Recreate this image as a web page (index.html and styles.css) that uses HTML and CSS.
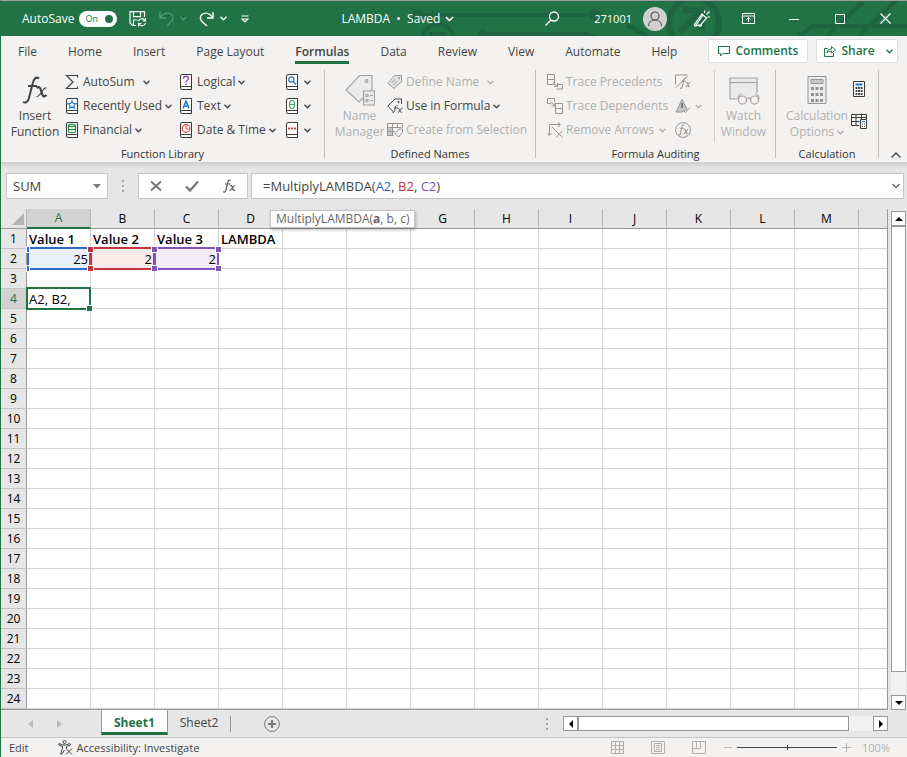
FILE: index.html
```html
<!DOCTYPE html>
<html lang="en">
<head>
  <meta charset="UTF-8">
  <title>LAMBDA - Excel</title>
  <link rel="stylesheet" href="styles.css">
</head>
<body>

  <!-- shared icons -->
  <svg class="sprite" width="0" height="0" aria-hidden="true">
    <symbol id="chevron" viewBox="0 0 7 5"><path d="M.5 .8 3.5 3.8 6.5 .8" fill="none" stroke="currentColor" stroke-width="1.3"/></symbol>
    <symbol id="book" viewBox="0 0 16 16"><path d="M13.5 .5H4a1.5 1.5 0 0 0-1.5 1.5v12A1.5 1.5 0 0 0 4 15.5h9.500z" fill="#fff" stroke="#3b3a39"/><path d="M2.500 13.500A1.500 1.500 0 0 1 4 12.500h9.500" fill="none" stroke="#3b3a39"/></symbol>
    <symbol id="fx" viewBox="0 0 14 14"><path d="M8.500 1.500C6.500 .5 6 2 5.500 4.500L4 11C3.600 13 2.500 13.500 1 12.800M3 5h5M8 6.500c1.500-.8 2 .5 2.500 2.500s1 3 2.500 2M13 6.500c-2 0-3 5-5.500 5" fill="none" stroke="currentColor" stroke-width="1.200"/></symbol>
  </svg>

  <header class="titlebar">
    <svg class="circuit" width="500" height="36" viewBox="0 0 500 36" fill="none" stroke="#1f6440" stroke-width="4" aria-hidden="true">
      <circle cx="11" cy="15" r="4"/><path d="M15 15h166"/><circle cx="188" cy="15" r="4" fill="#1f6440"/>
      <circle cx="31" cy="40" r="16"/><path d="M22 34h18"/>
      <circle cx="76" cy="34" r="3"/><path d="M80 34h100l10 4"/>
      <path d="M220 25l22 12"/><circle cx="287" cy="23" r="25" stroke-width="6"/><path d="M275 10h20v20M295 10l-22 22" stroke-width="6"/>
      <path d="M392 36l14-10h100M452 36l38-36M420 36l36-34"/>
    </svg>
    <label class="autosave">AutoSave
      <input type="checkbox" checked>
      <span class="toggle">On</span>
    </label>
    <div class="quick">
      <button aria-label="Save"><svg width="18" height="16" viewBox="0 0 18 16" fill="none" stroke="currentColor" stroke-width="1.200"><path d="M7 14.500H3.500L1 12V.6h14.500V6M4.500 .6v5h7v-5M4.500 14.500V9h4"/><path d="M9.500 10.500a3.500 3.500 0 0 1 6.500-1M16.500 7v3h-3M16.500 12a3.500 3.500 0 0 1-6.500 1M9.500 15.500v-3h3"/></svg></button>
      <button class="dim" aria-label="Undo"><svg width="16" height="16" viewBox="0 0 16 16" fill="none" stroke="currentColor" stroke-width="1.400"><path d="M1 1v6h6M1.500 6.500C4 2 9 1 12.500 3.500c3 3 1 6-.5 7.500L8 15"/></svg></button>
      <button class="dim drop" aria-label="Undo list"><svg width="7" height="5"><use href="#chevron"/></svg></button>
      <button class="redo" aria-label="Redo"><svg width="16" height="16" viewBox="0 0 16 16" fill="none" stroke="currentColor" stroke-width="1.400"><path d="M14 1v6H8M13.500 6.500C11 2 6 1 3 3.500S1.500 9 3.500 11L8 15"/></svg></button>
      <button class="drop" aria-label="Redo list"><svg width="7" height="5"><use href="#chevron"/></svg></button>
      <button class="custom" aria-label="Customize toolbar"><svg width="8" height="8" viewBox="0 0 8 8" fill="none" stroke="currentColor" stroke-width="1.200"><path d="M.5 1h7M1 4l3 3 3-3z"/></svg></button>
    </div>
    <button class="doc">LAMBDA&nbsp; •&nbsp; Saved <svg width="9" height="6"><use href="#chevron"/></svg></button>
    <button class="search" aria-label="Search"><svg width="15" height="15" viewBox="0 0 15 15" fill="none" stroke="currentColor" stroke-width="1.300"><circle cx="9" cy="5.500" r="4.500"/><path d="M6 9 .5 14.500"/></svg></button>
    <span class="user">271001</span>
    <button class="avatar" aria-label="Account"><svg width="24" height="24" viewBox="0 0 24 24" fill="none" stroke="#555" stroke-width="1.200"><circle cx="12" cy="12" r="12" fill="#d2d0ce" stroke="none"/><circle cx="12" cy="9" r="4"/><path d="M5.500 19c0-8 13-8 13 0"/></svg></button>
    <button class="pen" aria-label="Coming soon"><svg width="18" height="18" viewBox="0 0 18 18" fill="none" stroke="currentColor" stroke-width="1.200"><path d="M2.500 16 10 5l3.500 3L8 14.500zM2.500 16l-1-1.500L9 4l1 1M6 15.500c1 1.500 3 .5 2.500-1.500M11.500 3V.5M13.500 4.500l3-3M14.500 7H17"/></svg></button>
    <div class="window-buttons">
      <button aria-label="Ribbon display options"><svg width="13" height="11" viewBox="0 0 13 11" fill="none" stroke="currentColor"><path d="M.5 .5h12v10H.5zM.5 3h12M6.500 9V4.500M4.500 6.500l2-2 2 2"/></svg></button>
      <button aria-label="Minimize"><svg width="10" height="10" viewBox="0 0 10 10" stroke="currentColor"><path d="M0 5.500h10"/></svg></button>
      <button aria-label="Maximize"><svg width="10" height="10" viewBox="0 0 10 10" fill="none" stroke="currentColor"><path d="M.5 .5h9v9h-9z"/></svg></button>
      <button aria-label="Close"><svg width="11" height="11" viewBox="0 0 11 11" stroke="currentColor" stroke-width="1.200"><path d="M.5 .5l10 10M10.500 .5l-10 10"/></svg></button>
    </div>
  </header>

  <nav class="tabs">
    <a href="#file">File</a>
    <a href="#home">Home</a>
    <a href="#insert">Insert</a>
    <a href="#layout">Page Layout</a>
    <a href="#formulas" class="active">Formulas</a>
    <a href="#data">Data</a>
    <a href="#review">Review</a>
    <a href="#view">View</a>
    <a href="#automate">Automate</a>
    <a href="#help">Help</a>
    <div class="actions">
      <button><svg width="12" height="11" viewBox="0 0 12 11" fill="none" stroke="currentColor"><path d="M.5 .5h11v7H5L2.500 10V7.500h-2z"/></svg>Comments</button>
      <button class="share"><svg width="12" height="12" viewBox="0 0 12 12" fill="none" stroke="currentColor"><path d="M3.500 3.500h-3v8h9V8M3 8c0-3 2-4 4.500-4V1.500L11.500 5 7.500 8V6C5.500 6 4 6.500 3 8z"/></svg>Share<svg class="share-drop" width="7" height="5"><use href="#chevron"/></svg></button>
    </div>
  </nav>

  <section class="ribbon">
    <div class="group library">
      <div class="tools">
        <button class="big">
          <svg width="28" height="32" viewBox="0 0 28 32" fill="none" stroke="currentColor"><path d="M18 4.500C15 2 12.500 5 11.500 10L8 24c-1 4-3.500 5.500-6 4M7 12h9" stroke-width="2"/><path d="M15.500 14c3-2 4 0 5 4s2 6 5 3" stroke-width="2.200"/><path d="M25.500 14c-4-1-5.500 9-10 8.500" stroke-width="1.200"/></svg>
          Insert<br>Function
        </button>
        <div class="list">
          <button><svg width="16" height="16" viewBox="0 0 16 16" fill="none" stroke="currentColor" stroke-width="1.200"><path d="M13.500 3.500v-2h-11L9 8l-6.500 6.500h11v-2"/></svg>AutoSum<svg class="chev split" width="7" height="5"><use href="#chevron"/></svg></button>
          <button><svg width="16" height="16"><use href="#book"/><path d="M8 2.500 9.200 5.500h3L9.800 7.400l.9 3L8 8.600l-2.700 1.800.9-3L3.800 5.500h3z" fill="none" stroke="#2b88d8" stroke-width="1.100"/></svg>Recently Used<svg class="chev" width="7" height="5"><use href="#chevron"/></svg></button>
          <button><svg width="16" height="16"><use href="#book"/><path d="M4.500 3.500c0-1.500 7-1.500 7 0v6c0 1.500-7 1.500-7 0zc0 1.500 7 1.500 7 0M4.500 6.500c0 1.500 7 1.500 7 0" fill="none" stroke="#1e8a44" stroke-width="1.200"/></svg>Financial<svg class="chev" width="7" height="5"><use href="#chevron"/></svg></button>
        </div>
        <div class="list">
          <button><svg width="16" height="16"><use href="#book"/><path d="M5.500 4.500c0-3 5-3 5 0 0 2-2.500 2-2.500 4M8 9.500V11" fill="none" stroke="#9a44b5" stroke-width="1.400"/></svg>Logical<svg class="chev" width="7" height="5"><use href="#chevron"/></svg></button>
          <button><svg width="16" height="16"><use href="#book"/><path d="M5 10.500 8 3l3 7.500M6 8h4" fill="none" stroke="#1979ca" stroke-width="1.500"/></svg>Text<svg class="chev" width="7" height="5"><use href="#chevron"/></svg></button>
          <button><svg width="16" height="16"><use href="#book"/><circle cx="8" cy="6.500" r="3.800" fill="none" stroke="#e03c3c" stroke-width="1.200"/><path d="M8 4v3h2.500" fill="none" stroke="#e03c3c"/></svg>Date &amp; Time<svg class="chev" width="7" height="5"><use href="#chevron"/></svg></button>
        </div>
        <div class="list">
          <button aria-label="Lookup and Reference"><svg width="16" height="16"><use href="#book"/><circle cx="7.300" cy="5.500" r="2.600" fill="none" stroke="#1979ca" stroke-width="1.200"/><path d="M9 7.500l3 3" stroke="#1979ca" stroke-width="1.400"/></svg><svg class="chev" width="7" height="5"><use href="#chevron"/></svg></button>
          <button aria-label="Math and Trig"><svg width="16" height="16"><use href="#book"/><ellipse cx="8" cy="6.500" rx="2.500" ry="4" fill="none" stroke="#37a660" stroke-width="1.200"/><path d="M5.500 6.500h5" stroke="#37a660"/></svg><svg class="chev" width="7" height="5"><use href="#chevron"/></svg></button>
          <button aria-label="More Functions"><svg width="16" height="16"><use href="#book"/><path d="M4 6.500h8" stroke="#e03c3c" stroke-width="2" stroke-dasharray="2 1"/></svg><svg class="chev" width="7" height="5"><use href="#chevron"/></svg></button>
        </div>
      </div>
      <h2>Function Library</h2>
    </div>

    <div class="group names">
      <div class="tools">
        <button class="big" disabled>
          <svg width="30" height="32" viewBox="0 0 30 32" fill="#ebebeb" stroke="#a6a4a2" stroke-width="1.200"><path d="M14.500 1.500H27v14L14 28 1 16z"/><circle cx="21.500" cy="7" r="1.300"/><path d="M18.500 17h11v14h-11z"/><path d="M21 20.500h2v2h-2zM21 25.500h2v2h-2zM25 21.500h3M25 26.500h3"/></svg>
          Name<br>Manager
        </button>
        <div class="list">
          <button disabled><svg width="16" height="16" viewBox="0 0 16 16" fill="#e3e3e3" stroke="#9d9b99"><path d="M7.500 1.500h7v6l-7.500 7L.8 9z"/><circle cx="12" cy="4" r=".8"/><path d="M4.500 9l4-4M6.500 11l4-4"/></svg>Define Name<svg class="chev split" width="7" height="5"><use href="#chevron"/></svg></button>
          <button><svg width="16" height="16" viewBox="0 0 16 16" fill="none" stroke="currentColor"><path d="M14.500 6V1H8L.8 8l5.700 6"/><circle cx="11.500" cy="4" r=".7"/><path d="M10.500 7.500c-1.500-.8-2 1-2.500 3.500s-1 4-2.500 3.500M7 10h4M11 10c2 0 1 4.500 4 4.500M15.500 10c-2 0-2.500 4.500-4.500 4.500" stroke-width=".9"/></svg>Use in Formula<svg class="chev" width="7" height="5"><use href="#chevron"/></svg></button>
          <button disabled><svg width="16" height="16" viewBox="0 0 16 16" fill="none" stroke="#979593"><path d="M.5 5.500h5v8h-5z" fill="#c8c6c4" stroke="none"/><path d="M15.500 6V1.500H.5v12h6M.5 5.500h14M.5 9.500H8M5.500 1.500v12M10.500 1.500V6"/><path d="M12 7h3.500v3.500L11.500 15 8 11.500z" fill="#f3f2f1"/></svg>Create from Selection</button>
        </div>
      </div>
      <h2>Defined Names</h2>
    </div>

    <div class="group auditing">
      <div class="tools">
        <div class="list">
          <button disabled><svg width="16" height="16" viewBox="0 0 16 16" fill="none" stroke="#979593"><path d="M.5 .5h7v10h-7zM.5 5.500h7M10 10.500h5.500v4.500h-6M6 8l4.500 4.500M10.500 9v3.500H7"/></svg>Trace Precedents</button>
          <button disabled><svg width="16" height="16" viewBox="0 0 16 16" fill="none" stroke="#979593"><path d="M4 5.500H.5v-5h7v3M8.500 5.500h7v10h-7zM8.500 10.500h7M3.500 3.500 8 8M8 4.500V8H4.500"/></svg>Trace Dependents</button>
          <button disabled><svg width="16" height="16" viewBox="0 0 16 16" fill="none" stroke="#979593"><path d="M2.500 13V2.500h11M11 .5l2.500 2L11 5M.5 11l2 2.500L4.500 11M5 5l4 4M9 9l6.500 6.500M15.500 9 9 15.500"/></svg>Remove Arrows<svg class="chev split" width="7" height="5"><use href="#chevron"/></svg></button>
        </div>
        <div class="list">
          <button disabled aria-label="Show Formulas"><svg width="18" height="16" viewBox="0 0 18 16" fill="none" stroke="#979593"><path d="M13 1H1.500v9M1.500 14 14 1.500"/><use href="#fx" x="5" y="3" width="12" height="12" color="#979593"/></svg></button>
          <button disabled aria-label="Error Checking"><svg width="18" height="16" viewBox="0 0 18 16" fill="none" stroke="#979593"><path d="M8 1.500 13 11 8 14H2z" fill="#c8c6c4"/><path d="M8 5v5" stroke="#777" stroke-width="2"/><path d="M9.500 12.500l2 2 4.500-5"/></svg><svg class="chev" width="7" height="5"><use href="#chevron"/></svg></button>
          <button disabled aria-label="Evaluate Formula"><svg width="18" height="16" viewBox="0 0 18 16" fill="none" stroke="#979593"><circle cx="9" cy="8" r="7.400"/><use href="#fx" x="3" y="2" width="12" height="12" color="#979593"/></svg></button>
        </div>
        <button class="big watch" disabled>
          <svg width="32" height="32" viewBox="0 0 32 32" fill="none" stroke="#a6a4a2" stroke-width="1.200"><path d="M9 25H2V4h27v15" fill="#ebebeb"/><path d="M2 8.500h27"/><path d="M10 25c0-3 2-5 4-5M31 25c0-3-2-5-4-5M18.500 25c1-1.500 3-1.500 4 0"/><circle cx="14.500" cy="26" r="4" fill="#f3f2f1"/><circle cx="26.500" cy="26" r="4" fill="#f3f2f1"/></svg>
          Watch<br>Window
        </button>
      </div>
      <h2>Formula Auditing</h2>
    </div>

    <div class="group calculation">
      <div class="tools">
        <button class="big" disabled>
          <svg width="20" height="32" viewBox="0 0 20 32" fill="none" stroke="#979593"><path d="M1 2.500h18v27H1z" fill="#ebebeb"/><path d="M4 5.500h12v4H4z" fill="#c8c6c4"/><path d="M4 14.500h12M4 20.500h12M4 26.500h12" stroke-width="3" stroke-dasharray="3 1.500"/></svg>
          Calculation<br>Options <svg width="7" height="5"><use href="#chevron"/></svg>
        </button>
        <div class="list">
          <button aria-label="Calculate Now"><svg width="16" height="16" viewBox="0 0 16 16" fill="none" stroke="#3b3a39"><path d="M2.500 .5h11v15h-11z" fill="#fff"/><path d="M4.500 3.500h7" stroke="#1979ca" stroke-width="2"/><path d="M4.500 7h7M4.500 10h7M4.500 13h7" stroke-width="2" stroke-dasharray="1.800 .8"/></svg></button>
          <button aria-label="Calculate Sheet"><svg width="16" height="16" viewBox="0 0 16 16" fill="none" stroke="#3b3a39"><path d="M8 12.500H.5V1.500h15V6M.5 4.500h15M.5 8.500h8M5 1.500v11M10.500 1.500V6"/><path d="M9.500 6.500h6v9h-6z" fill="#fff"/><path d="M11 8.500h3" stroke="#1979ca"/><path d="M11 11h3M11 13.500h3" stroke-dasharray="1 1"/></svg></button>
        </div>
      </div>
      <h2>Calculation</h2>
    </div>
    <button class="collapse" aria-label="Collapse ribbon"><svg width="10" height="6" viewBox="0 0 10 6" fill="none" stroke="currentColor" stroke-width="1.300"><path d="M.5 5.500 5 1l4.500 4.500"/></svg></button>
  </section>

  <section class="formula-bar">
    <div class="namebox">
      <input type="text" value="SUM" aria-label="Name box">
      <button aria-label="Names"><svg width="8" height="5" viewBox="0 0 8 5"><path d="M0 0h8L4 4.500z" fill="#777"/></svg></button>
    </div>
    <span class="dots"></span>
    <div class="entry">
      <button aria-label="Cancel"><svg width="12" height="12" viewBox="0 0 12 12" stroke="#757575" stroke-width="1.900"><path d="M1 1.500l10 9M11 1.500l-10 9"/></svg></button>
      <button aria-label="Enter"><svg width="14" height="12" viewBox="0 0 14 12" fill="none" stroke="#757575" stroke-width="2.300"><path d="M1 6.500l4 4 8-9"/></svg></button>
      <button aria-label="Insert function"><svg width="14" height="14" color="#555"><use href="#fx"/></svg></button>
    </div>
    <div class="formula">
      <div class="formula-text" role="textbox" contenteditable="true" aria-label="Formula" spellcheck="false">=MultiplyLAMBDA(<span class="ref-a">A2</span>, <span class="ref-b">B2</span>, <span class="ref-c">C2</span>)</div>
      <button aria-label="Expand formula bar"><svg width="8" height="6" color="#666"><use href="#chevron"/></svg></button>
    </div>
    <div class="hint">MultiplyLAMBDA(<b>a</b>, b, c)</div>
  </section>

  <main class="workspace">
    <div class="grid">
      <table id="sheet"></table>
    </div>
    <div class="vscroll">
      <button aria-label="Scroll up"><svg width="8" height="4"><path d="M0 4h8L4 0z"/></svg></button>
      <div class="track"><div class="thumb"></div></div>
      <button aria-label="Scroll down"><svg width="8" height="4"><path d="M0 0h8L4 4z"/></svg></button>
    </div>
  </main>

  <div class="sheet-bar">
    <button class="nav" aria-label="Previous sheet"><svg width="5" height="8"><path d="M5 0v8L0 4z"/></svg></button>
    <button class="nav" aria-label="Next sheet"><svg width="5" height="8"><path d="M0 0v8l5-4z"/></svg></button>
    <a href="#sheet1" class="sheet-tab active">Sheet1</a>
    <a href="#sheet2" class="sheet-tab">Sheet2</a>
    <button class="add" aria-label="New sheet"><svg width="16" height="16" viewBox="0 0 16 16" fill="none" stroke="#777"><circle cx="8" cy="8" r="7.400"/><path d="M8 4v8M4 8h8" stroke-width="2"/></svg></button>
    <span class="dots"></span>
    <div class="hscroll">
      <button aria-label="Scroll left"><svg width="4" height="8"><path d="M4 0v8L0 4z"/></svg></button>
      <div class="track"><div class="thumb"></div></div>
      <button aria-label="Scroll right"><svg width="4" height="8"><path d="M0 0v8l4-4z"/></svg></button>
    </div>
  </div>

  <footer class="status">
    <span class="mode">Edit</span>
    <button class="access"><svg width="15" height="15" viewBox="0 0 15 15" fill="none" stroke="currentColor"><circle cx="6.500" cy="2" r="1.500"/><path d="M1 3.500 .8 5l3.700 1.500v2L2.500 14h1.500l2.500-4M1 3.500l4 1.500h3l4-1.500.5 1.500-4 1.500v2M8 8.500l6 6M14 8.500l-6 6"/></svg>Accessibility: Investigate</button>
    <div class="views">
      <button aria-label="Normal"><svg width="13" height="13" viewBox="0 0 13 13" fill="none" stroke="currentColor"><path d="M.5 .5h12v12H.5zM4.500 .5v12M8.500 .5v12M.5 4.500h12M.5 8.500h12"/></svg></button>
      <button aria-label="Page layout"><svg width="14" height="13" viewBox="0 0 14 13" fill="none" stroke="currentColor"><path d="M.5 .5h13v12H.5zM3.500 2.500h7v8h-7zM5 4.500h4M5 6.500h4M5 8.500h4"/></svg></button>
      <button aria-label="Page break preview"><svg width="14" height="13" viewBox="0 0 14 13" fill="none" stroke="currentColor"><path d="M.5 .5h13v12H.5zM.5 7.500h8v-7M4.500 .5v7"/></svg></button>
    </div>
    <div class="zoom">
      <button aria-label="Zoom out"><svg width="8" height="9" viewBox="0 0 8 9" stroke="currentColor"><path d="M0 4.500h8"/></svg></button>
      <input type="range" min="0" max="100" value="50" aria-label="Zoom">
      <button aria-label="Zoom in"><svg width="9" height="9" viewBox="0 0 9 9" stroke="currentColor"><path d="M0 4.500h9M4.500 0v9"/></svg></button>
      <span>100%</span>
    </div>
  </footer>

  <script src="script.js"></script>
</body>
</html>
```
FILE: styles.css
```css
* {
  margin: 0;
  padding: 0;
  box-sizing: border-box;
}

body {
  display: flex;
  flex-direction: column;
  height: 100vh;
  overflow: hidden;
  border-top: 1px solid #a19f9d;
  border-left: 1px solid #217346;
  background: #e6e6e6;
  color: #444;
  font-family: "Open Sans", "Noto Sans", sans-serif;
  font-size: 12px;
  line-height: 16px;
}

button {
  display: flex;
  align-items: center;
  border: none;
  background: none;
  color: inherit;
  font: inherit;
}

svg {
  flex: none;
}

a {
  color: inherit;
  text-decoration: none;
}

.sprite {
  position: absolute;
}

/* title bar */
.titlebar {
  position: relative;
  display: flex;
  flex: none;
  align-items: center;
  height: 35px;
  padding-left: 21px;
  overflow: hidden;
  background: #217346;
  color: #fff;
}

.titlebar > * {
  position: relative;
}

.titlebar .circuit {
  position: absolute;
  top: -1px;
  left: 406px;
}

.autosave {
  display: flex;
  align-items: center;
  gap: 5px;
}

.autosave input {
  position: absolute;
  opacity: 0;
}

.toggle {
  position: relative;
  width: 38px;
  height: 16px;
  padding-left: 6px;
  border-radius: 8px;
  background: #fff;
  color: #217346;
  font-size: 9px;
}

.toggle::after {
  content: "";
  position: absolute;
  top: 4px;
  right: 4px;
  width: 8px;
  height: 8px;
  border-radius: 50%;
  background: #217346;
}

.quick {
  display: flex;
  align-items: center;
  margin-left: 12px;
}

.quick .dim {
  margin-left: 12px;
  color: #4f9a70;
}

.quick .drop,
.quick .dim.drop {
  margin-left: 5px;
}

.quick .redo {
  margin-left: 12px;
}

.quick .custom {
  margin-left: 14px;
}

.doc {
  gap: 5px;
  margin-left: 92px;
}

.search {
  margin-left: auto;
}

.user {
  margin-left: 34px;
  font-size: 11px;
}

.avatar {
  margin-left: 11px;
}

.pen {
  margin-left: 26px;
}

.window-buttons {
  display: flex;
  margin-left: 14px;
}

.window-buttons button {
  justify-content: center;
  width: 46px;
  height: 35px;
}

.window-buttons button:last-child {
  width: 44px;
}

/* ribbon tabs */
.tabs {
  display: flex;
  flex: none;
  gap: 31px;
  height: 30px;
  padding: 0 10px 0 17px;
  background: #f3f2f1;
  line-height: 32px;
  white-space: nowrap;
}

.tabs a {
  height: 28px;
}

.tabs .active {
  border-bottom: 3px solid #217346;
  font-weight: 600;
}

.actions {
  display: flex;
  gap: 8px;
  margin-left: auto;
  padding-top: 3px;
}

.actions button {
  gap: 5px;
  height: 24px;
  padding: 0 9px;
  border: 1px solid #e1dfdd;
  border-radius: 2px;
  background: #fff;
  color: #217346;
  font-weight: 600;
}

.actions .share {
  padding: 0 4px 0 7px;
}

.share-drop {
  margin-left: 6px;
}

/* ribbon */
.ribbon {
  display: flex;
  flex: none;
  height: 96px;
  padding-top: 4px;
  background: #f3f2f1;
}

.group {
  display: flex;
  flex: none;
  flex-direction: column;
  height: 88px;
  border-right: 1px solid #c1bfbd;
}

.group h2 {
  margin-top: auto;
  font-size: 11px;
  font-weight: 400;
  line-height: 8px;
  text-align: center;
  color: #333;
}

.tools {
  display: grid;
  height: 72px;
}

.library {
  width: 324px;
}

.library .tools {
  grid-template-columns: 58px 114px 106px 38px;
  padding-left: 5px;
}

.names {
  width: 211px;
}

.names .tools {
  grid-template-columns: 55px 140px;
  padding-left: 7px;
}

.auditing {
  width: 240px;
}

.auditing .tools {
  grid-template-columns: 127px 40px 58px;
  padding-left: 11px;
}

.calculation {
  width: 103px;
}

.calculation .tools {
  grid-template-columns: 68px 20px;
  padding-left: 7px;
}

.list {
  display: flex;
  flex-direction: column;
}

.list button {
  gap: 3px;
  height: 24px;
  white-space: nowrap;
}

.library .list:last-child .chev {
  margin-left: 1px;
}

.list .split {
  margin-left: 5px;
}

.auditing .split {
  margin-left: 2px;
}

.calculation .list {
  gap: 8px;
  padding-top: 7px;
}

.big {
  display: block;
  text-align: center;
  white-space: nowrap;
}

.big > svg:first-child {
  display: block;
  margin: 2px auto;
}

.big svg {
  vertical-align: middle;
}

button:disabled {
  color: #b1afad;
}

.watch {
  border-left: 1px solid #d2d0ce;
}

.collapse {
  align-self: flex-end;
  margin: 0 6px 4px auto;
}

/* formula bar */
.formula-bar {
  position: relative;
  display: flex;
  flex: none;
  height: 47px;
  padding: 11px 3px 10px 5px;
  background: linear-gradient(#cfcfcf, #e6e6e6 7px);
}

.namebox,
.entry,
.formula {
  display: flex;
  border: 1px solid #c6c6c6;
  background: #fff;
}

.namebox {
  width: 102px;
}

.namebox input {
  width: 86px;
  padding-left: 6px;
  border: none;
  outline: none;
  background: none;
  color: #444;
  font: inherit;
  font-size: 13px;
}

.dots {
  width: 2px;
  height: 12px;
  background: repeating-linear-gradient(#a6a6a6 0 2px, transparent 2px 5px);
}

.formula-bar .dots {
  margin: 7px 14px 0;
}

.entry {
  justify-content: space-around;
  width: 110px;
  margin-right: 3px;
}

.formula {
  flex: 1;
  justify-content: space-between;
  padding: 0 3px 0 11px;
}

.formula-text {
  flex: 1;
  outline: none;
  font-size: 13px;
  line-height: 25px;
  white-space: nowrap;
}

.ref-a { color: #2f6ac7; }
.ref-b { color: #c2333c; }
.ref-c { color: #8156ba; }

.hint {
  position: absolute;
  top: 48px;
  left: 269px;
  z-index: 5;
  padding: 0 5px;
  border: 1px solid #c6c6c6;
  background: #fff;
  box-shadow: 1px 2px 3px rgba(0, 0, 0, 0.25);
  color: #666;
}

/* sheet */
.workspace {
  display: flex;
  flex: 1;
  min-height: 0;
}

.grid {
  flex: 1;
  min-width: 0;
  overflow: hidden;
  border-bottom: 1px solid #999;
}

#sheet {
  width: 922px;
  border-spacing: 0;
  table-layout: fixed;
  color: #000;
  font-size: 13px;
  line-height: 18px;
}

#sheet th {
  height: 20px;
  border-right: 1px solid #b4b4b4;
  border-bottom: 1px solid #999;
  background: #e6e6e6;
  font-size: 12px;
  font-weight: 400;
}

#sheet tbody th {
  border-right-color: #999;
  border-bottom-color: #c4c4c4;
}

#sheet .corner {
  width: 26px;
  border-right-color: #b4b4b4;
}

.corner svg {
  display: block;
  margin-left: 11px;
}

#sheet td {
  position: relative;
  height: 20px;
  padding: 0 2px;
  border-right: 1px solid #d4d4d4;
  border-bottom: 1px solid #d4d4d4;
  background: #fff;
  white-space: nowrap;
}

#sheet .current {
  background: #d2d2d2;
  color: #217346;
}

#sheet thead .current {
  border-bottom: 2px solid #217346;
}

#sheet .bold {
  font-weight: 600;
}

#sheet .number {
  text-align: right;
}

#sheet .fill-a { background: #eaf0f9; }
#sheet .fill-b { background: #faeaea; }
#sheet .fill-c { background: #f1ecf8; }

.range,
.cursor {
  position: absolute;
  inset: -2px -1px -2px -1px;
  z-index: 1;
  border: 2px solid;
}

.fill-a .range { color: #2f6ac7; }
.fill-b .range { color: #c2333c; z-index: 2; }
.fill-c .range { color: #8156ba; z-index: 3; }

.fill-a .range {
  left: 0;
}

/* corner handles */
.range i {
  position: absolute;
  width: 5px;
  height: 5px;
  background: currentColor;
  box-shadow: 0 0 0 1px #fff;
}

.range i:nth-child(1) { top: -2px; left: -4px; }
.range i:nth-child(2) { top: -2px; right: -4px; }
.range i:nth-child(3) { bottom: -3px; left: -4px; }
.range i:nth-child(4) { bottom: -3px; right: -4px; }

.fill-a .range i:nth-child(odd) {
  left: -2px;
  width: 2px;
}

.cursor {
  border-color: #217346;
}

.cursor i {
  position: absolute;
  right: -3px;
  bottom: -3px;
  width: 5px;
  height: 5px;
  background: #217346;
  box-shadow: -1px -1px 0 #fff;
}

/* scroll bars */
.vscroll,
.hscroll {
  display: flex;
}

.vscroll {
  flex-direction: column;
  width: 20px;
  padding: 2px 1px 0 3px;
  border-left: 1px solid #999;
}

.vscroll button,
.hscroll button {
  flex: none;
  justify-content: center;
  width: 15px;
  height: 15px;
  border: 1px solid #999;
  background: #fff;
}

.track {
  flex: 1;
  background: #f1f1f1;
}

.thumb {
  border: 1px solid #999;
  background: #fff;
}

.vscroll .track {
  width: 15px;
}

.vscroll .thumb {
  height: 95%;
}

.hscroll {
  width: 325px;
}

.hscroll .thumb {
  width: 92%;
  height: 15px;
}

/* sheet tabs */
.sheet-bar {
  display: flex;
  flex: none;
  align-items: center;
  height: 27px;
  padding: 0 19px 0 27px;
}

.nav {
  width: 29px;
}

.nav svg {
  fill: #bbb;
}

.sheet-tab {
  align-self: flex-start;
  padding: 0 12px;
  line-height: 26px;
}

.sheet-tab.active {
  height: 25px;
  margin-left: 15px;
  border: 1px solid #999;
  border-width: 0 1px 3px;
  border-bottom-color: #217346;
  background: #fff;
  color: #217346;
  font-weight: 700;
}

.add {
  margin-right: auto;
  padding-left: 33px;
  border-left: 1px solid #999;
}

.sheet-bar .dots {
  margin-right: 15px;
}

/* status bar */
.status {
  display: flex;
  flex: none;
  align-items: center;
  height: 20px;
  padding: 0 17px 0 8px;
  border-top: 1px solid #c6c6c6;
  background: #f3f2f1;
  font-size: 11px;
}

.access {
  gap: 4px;
  margin-left: 29px;
}

.views {
  display: flex;
  gap: 27px;
  margin-left: auto;
  color: #b1afad;
}

.zoom {
  display: flex;
  align-items: center;
  gap: 5px;
  margin-left: 18px;
  color: #b1afad;
}

.zoom span {
  margin-left: 6px;
}

.zoom input {
  appearance: none;
  width: 100px;
  height: 9px;
  background: linear-gradient(#444, #444) center / 100% 1px no-repeat;
}

.zoom input::-webkit-slider-thumb {
  appearance: none;
  width: 1px;
  height: 5px;
  background: #444;
}
```
FILE: script.js
```js
const columns = [..."ABCDEFGHIJKLM", ""];
const rowCount = 24;
const current = { col: "A", row: 4 };

const cells = {
  A1: { text: "Value 1", cls: "bold" },
  B1: { text: "Value 2", cls: "bold" },
  C1: { text: "Value 3", cls: "bold" },
  D1: { text: "LAMBDA", cls: "bold" },
  A2: { text: "25", cls: "number fill-a", range: true },
  B2: { text: "2", cls: "number fill-b", range: true },
  C2: { text: "2", cls: "number fill-c", range: true },
  A4: { text: "A2, B2,", cls: "", cursor: true }
};

function cellHtml(id) {
  const cell = cells[id];
  if (!cell) return "<td></td>";
  let extra = "";
  if (cell.range) extra = '<div class="range"><i></i><i></i><i></i><i></i></div>';
  if (cell.cursor) extra = '<div class="cursor"><i></i></div>';
  return `<td class="${cell.cls}">${cell.text}${extra}</td>`;
}

let html = '<thead><tr><th class="corner"><svg width="12" height="12"><path d="M12 0v12H0z" fill="#b4b4b4"/></svg></th>';
columns.forEach(c => {
  html += `<th class="${c === current.col ? "current" : ""}">${c}</th>`;
});
html += "</tr></thead><tbody>";

for (let r = 1; r <= rowCount; r++) {
  html += `<tr><th class="${r === current.row ? "current" : ""}">${r}</th>`;
  columns.forEach(c => {
    html += cellHtml(c + r);
  });
  html += "</tr>";
}

document.getElementById("sheet").innerHTML = html + "</tbody>";
```
